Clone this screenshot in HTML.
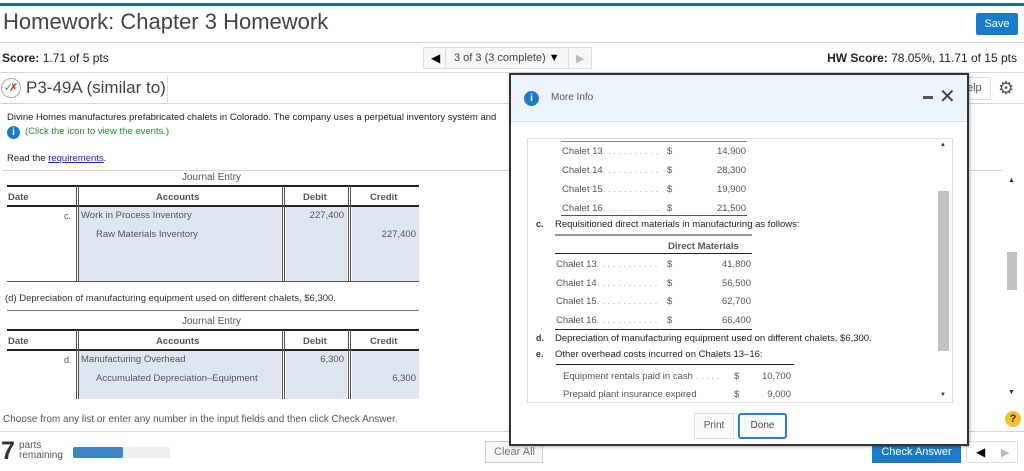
<!DOCTYPE html>
<html><head><meta charset="utf-8"><style>
*{margin:0;padding:0;box-sizing:border-box}
body{width:1024px;height:471px;overflow:hidden;background:#fff;font-family:"Liberation Sans",sans-serif;color:#333;position:relative;font-size:11px}
.a{position:absolute;white-space:nowrap}
.hl{position:absolute;height:1px;background:#d0d5de}
.bl{position:absolute;height:2px;background:#222}
.cell{position:absolute;background:#dfe6f1}
.vs{position:absolute;width:3px;border-left:1px solid #555;border-right:1px solid #555}
.r{text-align:right}
.g{color:#555}
</style></head><body>
<div class="a" style="left:0;top:3px;width:1024px;height:3px;background:#1f6e8c"></div>
<div class="a" style="left:3px;top:9px;font-size:22px;color:#444">Homework: Chapter 3 Homework</div>
<div class="a" style="left:976px;top:13px;width:42px;height:22px;background:#1a7cc9;color:#fff;font-size:11px;text-align:center;line-height:22px;border-radius:2px">Save</div>
<div class="hl" style="left:0;top:42px;width:1024px"></div>
<div class="a" style="left:2px;top:51px;font-size:12px;color:#222"><b>Score:</b> 1.71 of 5 pts</div>
<div class="a" style="left:423px;top:47px;width:169px;height:22px;border:1px solid #ddd;background:#f7f7f7"></div>
<div class="a" style="left:445px;top:47px;width:1px;height:22px;background:#ddd"></div>
<div class="a" style="left:568px;top:47px;width:1px;height:22px;background:#ddd"></div>
<div class="a" style="left:431px;top:51px;font-size:12px;color:#000">◀</div>
<div class="a" style="left:454px;top:52px;font-size:11px;color:#444">3 of 3 (3 complete) <span style="color:#000">▼</span></div>
<div class="a" style="left:576px;top:52px;font-size:11px;color:#bbb">▶</div>
<div class="a" style="right:7px;top:51px;font-size:12px;color:#222"><b>HW Score:</b> 78.05%, 11.71 of 15 pts</div>
<div class="hl" style="left:0;top:72px;width:1024px"></div>
<div class="a" style="left:1px;top:78px;width:20px;height:20px;border:1px solid #aaa;border-radius:50%;font-size:11px;line-height:18px;text-align:center"><span style="color:#3a3">✓</span><span style="color:#d22;margin-left:-4px">✗</span></div>
<div class="a" style="left:26px;top:78px;font-size:17px;color:#444">P3-49A (similar to)</div>
<div class="a" style="left:167px;top:76px;width:1px;height:26px;background:#ddd"></div>
<div class="a" style="left:966px;top:77px;width:25px;height:23px;border:1px solid #ddd;font-size:11px;line-height:21px;color:#555">elp</div>
<div class="a" style="left:998px;top:78px;font-size:18px;color:#555">⚙</div>
<div class="hl" style="left:0;top:103px;width:1024px"></div>
<div class="a" style="left:7px;top:112px;font-size:9.5px;color:#222">Divine Homes manufactures prefabricated chalets in Colorado. The company uses a perpetual inventory system and</div>
<div class="a" style="left:7px;top:126px;width:13px;height:13px;border-radius:50%;background:#1a7cc9;color:#fff;font-size:10px;font-weight:bold;text-align:center;line-height:13px">i</div>
<div class="a" style="left:25px;top:126px;font-size:9.5px;color:#2a8a2a">(Click the icon to view the events.)</div>
<div class="a" style="left:7px;top:153px;font-size:9.5px;color:#222">Read the <span style="color:#22c;text-decoration:underline">requirements</span>.</div>
<div class="hl" style="left:2px;top:170px;width:1000px"></div>
<div class="a g" style="left:182px;top:172px;font-size:10px">Journal Entry</div>
<div class="bl" style="left:7px;top:185px;width:412px"></div>
<div class="a g" style="left:8px;top:192px;font-size:9.5px;font-weight:bold">Date</div>
<div class="a g" style="left:156px;top:192px;font-size:9.5px;font-weight:bold">Accounts</div>
<div class="a g" style="left:303px;top:192px;font-size:9.5px;font-weight:bold">Debit</div>
<div class="a g" style="left:370px;top:192px;font-size:9.5px;font-weight:bold">Credit</div>
<div class="bl" style="left:7px;top:205px;width:412px"></div>
<div class="cell" style="left:79px;top:207px;width:202px;height:75px"></div>
<div class="cell" style="left:286px;top:207px;width:61px;height:75px"></div>
<div class="cell" style="left:352px;top:207px;width:67px;height:75px"></div>
<div class="vs" style="left:76px;top:186px;height:96px"></div>
<div class="vs" style="left:282px;top:186px;height:96px"></div>
<div class="vs" style="left:348px;top:186px;height:96px"></div>
<div class="a g" style="left:64px;top:211px;font-size:9px">c.</div>
<div class="a g" style="left:81px;top:210px;font-size:9.5px">Work in Process Inventory</div>
<div class="a g r" style="left:286px;top:210px;width:58px;font-size:9.5px">227,400</div>
<div class="a g" style="left:96px;top:229px;font-size:9.5px">Raw Materials Inventory</div>
<div class="a g r" style="left:352px;top:229px;width:64px;font-size:9.5px">227,400</div>
<div class="a" style="left:7px;top:281px;width:412px;height:1px;background:#555"></div>
<div class="a" style="left:5px;top:293px;font-size:9.5px;color:#333">(d) Depreciation of manufacturing equipment used on different chalets, $6,300.</div>
<div class="a" style="left:7px;top:310px;width:412px;height:1px;background:#777"></div>
<div class="a g" style="left:182px;top:316px;font-size:10px">Journal Entry</div>
<div class="bl" style="left:7px;top:329px;width:412px"></div>
<div class="a g" style="left:8px;top:336px;font-size:9.5px;font-weight:bold">Date</div>
<div class="a g" style="left:156px;top:336px;font-size:9.5px;font-weight:bold">Accounts</div>
<div class="a g" style="left:303px;top:336px;font-size:9.5px;font-weight:bold">Debit</div>
<div class="a g" style="left:370px;top:336px;font-size:9.5px;font-weight:bold">Credit</div>
<div class="bl" style="left:7px;top:349px;width:412px"></div>
<div class="cell" style="left:79px;top:351px;width:202px;height:48px"></div>
<div class="cell" style="left:286px;top:351px;width:61px;height:48px"></div>
<div class="cell" style="left:352px;top:351px;width:67px;height:48px"></div>
<div class="vs" style="left:76px;top:330px;height:69px"></div>
<div class="vs" style="left:282px;top:330px;height:69px"></div>
<div class="vs" style="left:348px;top:330px;height:69px"></div>
<div class="a g" style="left:64px;top:355px;font-size:9px">d.</div>
<div class="a g" style="left:81px;top:354px;font-size:9.5px">Manufacturing Overhead</div>
<div class="a g r" style="left:286px;top:354px;width:58px;font-size:9.5px">6,300</div>
<div class="a g" style="left:96px;top:373px;font-size:9.5px">Accumulated Depreciation–Equipment</div>
<div class="a g r" style="left:352px;top:373px;width:64px;font-size:9.5px">6,300</div>
<div class="a" style="left:1008px;top:177px;font-size:7px;color:#333">▲</div>
<div class="a" style="left:1007px;top:252px;width:10px;height:38px;background:#c2c2c2"></div>
<div class="a" style="left:1008px;top:389px;font-size:7px;color:#333">▼</div>
<div class="a" style="left:3px;top:414px;font-size:10px;color:#555">Choose from any list or enter any number in the input fields and then click Check Answer.</div>
<div class="a" style="left:1005px;top:411px;width:16px;height:16px;border-radius:50%;background:#f2c12e;font-size:11px;font-weight:bold;text-align:center;line-height:16px;color:#333">?</div>
<div class="hl" style="left:0;top:431px;width:1024px"></div>
<div class="a" style="left:1px;top:437px;font-size:25px;font-weight:bold;color:#333;line-height:28px">7</div>
<div class="a" style="left:19px;top:441px;font-size:10px;color:#555;line-height:10px">parts<br>remaining</div>
<div class="a" style="left:73px;top:447px;width:97px;height:11px;background:#eee;border-radius:2px"></div>
<div class="a" style="left:73px;top:447px;width:50px;height:11px;background:#3d86c6;border-radius:2px"></div>
<div class="a" style="left:485px;top:441px;width:58px;height:22px;border:1px solid #ccc;background:#f8f8f8;font-size:11px;color:#777;padding:4px 0 0 8px">Clear All</div>
<div class="a" style="left:872px;top:441px;width:89px;height:22px;background:#1a7cc9;color:#fff;font-size:11px;text-align:center;line-height:22px">Check Answer</div>
<div class="a" style="left:966px;top:441px;width:52px;height:22px;border:1px solid #ddd"></div>
<div class="a" style="left:976px;top:445px;font-size:12px;color:#000">◀</div>
<div class="a" style="left:1001px;top:446px;font-size:11px;color:#bbb">▶</div>
<div class="a" style="left:509px;top:73px;width:460px;height:373px;border:2px solid #333;background:#fff;box-shadow:1px 1px 3px rgba(0,0,0,.3)">
 <div class="a" style="left:0;top:0;width:456px;height:47px;background:#eef4fb;border-bottom:1px solid #cfe0f2"></div>
 <div class="a" style="left:13px;top:16px;width:15px;height:15px;border-radius:50%;background:#1a7cc9;color:#fff;font-size:10px;font-weight:bold;text-align:center;line-height:15px">i</div>
 <div class="a" style="left:40px;top:17px;font-size:10px;color:#555">More Info</div>
 <div class="a" style="left:412px;top:21px;width:10px;height:3px;background:#555"></div>
 <div class="a" style="left:428px;top:9px;font-size:20px;color:#444">✕</div>
 <div class="a" style="left:16px;top:63px;width:426px;height:265px;border:1px solid #ddd;overflow:hidden">
  <div class="a" style="left:412px;top:3px;font-size:6px">▲</div>
  <div class="a" style="left:410px;top:52px;width:11px;height:160px;background:#c2c2c2"></div>
  <div class="a" style="left:412px;top:253px;font-size:6px">▼</div>
  <div class="a" style="left:33px;top:2px;width:186px;height:1px;background:#888"></div>
  <div class="a g" style="left:34px;top:3px;font-size:9.5px;line-height:19px">Chalet 13<span style="color:#aaa">. . . . . . . . . . .</span><br>Chalet 14<span style="color:#aaa">. . . . . . . . . . .</span><br>Chalet 15<span style="color:#aaa">. . . . . . . . . . .</span><br>Chalet 16<span style="color:#aaa">. . . . . . . . . . .</span></div>
  <div class="a g" style="left:139px;top:3px;font-size:9.5px;line-height:19px">$<br>$<br>$<br>$</div>
  <div class="a g r" style="left:150px;top:3px;width:68px;font-size:9.5px;line-height:19px">14,900<br>28,300<br>19,900<br>21,500</div>
  <div class="a" style="left:33px;top:76px;width:186px;height:1px;background:#555"></div>
  <div class="a" style="left:8px;top:80px;font-size:9px;font-weight:bold;color:#333">c.</div>
  <div class="a" style="left:27px;top:80px;font-size:9.5px;color:#222">Requisitioned direct materials in manufacturing as follows:</div>
  <div class="a" style="left:27px;top:95px;width:197px;height:2px;background:#999"></div>
  <div class="a g" style="left:140px;top:102px;font-size:9.5px;font-weight:bold">Direct Materials</div>
  <div class="a" style="left:27px;top:114px;width:197px;height:1px;background:#222"></div>
  <div class="a g" style="left:28px;top:117px;font-size:9.5px;line-height:18.7px">Chalet 13<span style="color:#aaa">. . . . . . . . . . . .</span><br>Chalet 14<span style="color:#aaa">. . . . . . . . . . . .</span><br>Chalet 15<span style="color:#aaa">. . . . . . . . . . . .</span><br>Chalet 16<span style="color:#aaa">. . . . . . . . . . . .</span></div>
  <div class="a g" style="left:139px;top:117px;font-size:9.5px;line-height:18.7px">$<br>$<br>$<br>$</div>
  <div class="a g r" style="left:160px;top:117px;width:63px;font-size:9.5px;line-height:18.7px">41,800<br>56,500<br>62,700<br>66,400</div>
  <div class="a" style="left:27px;top:190px;width:197px;height:1px;background:#222"></div>
  <div class="a" style="left:8px;top:194px;font-size:9px;font-weight:bold;color:#333">d.</div>
  <div class="a" style="left:27px;top:194px;font-size:9.5px;color:#222">Depreciation of manufacturing equipment used on different chalets, $6,300.</div>
  <div class="a" style="left:8px;top:210px;font-size:9px;font-weight:bold;color:#333">e.</div>
  <div class="a" style="left:27px;top:210px;font-size:9.5px;color:#222">Other overhead costs incurred on Chalets 13–16:</div>
  <div class="a" style="left:28px;top:225px;width:238px;height:1px;background:#222"></div>
  <div class="a g" style="left:35px;top:229px;font-size:9.5px;line-height:18px">Equipment rentals paid in cash <span style="color:#aaa">. . . . .</span><br>Prepaid plant insurance expired</div>
  <div class="a g" style="left:206px;top:229px;font-size:9.5px;line-height:18px">$<br>$</div>
  <div class="a g r" style="left:220px;top:229px;width:43px;font-size:9.5px;line-height:18px">10,700<br>9,000</div>
 </div>
 <div class="a" style="left:183px;top:338px;width:40px;height:26px;border:1px solid #ddd;background:#fafafa;font-size:10px;color:#555;text-align:center;line-height:24px">Print</div>
 <div class="a" style="left:227px;top:338px;width:49px;height:26px;border:2px solid #2a7fd0;border-radius:3px;font-size:10px;color:#444;text-align:center;line-height:22px">Done</div>
</div>
</body></html>
